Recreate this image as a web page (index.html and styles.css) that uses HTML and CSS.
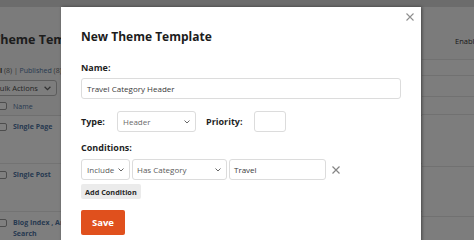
FILE: index.html
```html
<!DOCTYPE html>
<html>
<head>
<meta charset="utf-8">
<title>New Theme Template</title>
<link rel="stylesheet" href="styles.css">
</head>
<body>
<div class="screen">
  <div class="adminbar"></div>
  <div class="page">
    <div class="main">
      <h1 class="page-title">Theme Templates</h1>
      <div class="subsub"><span class="cur">All</span> <span class="count">(8)</span> | <a class="link">Published</a> <span class="count">(8)</span></div>
      <div class="tablenav">
        <div class="bulk"><span>Bulk Actions</span>
          <svg class="chev" viewBox="0 0 6 4" width="7" height="5"><path d="M0.5 0.5 L3 3 L5.5 0.5" fill="none" stroke="currentColor" stroke-width="1.1"/></svg>
        </div>
      </div>
      <div class="thead"><span class="cb"></span><a class="link">Name</a></div>
      <div class="trow"><span class="cb"></span><a class="link strong">Single Page</a></div>
      <div class="trow"><span class="cb"></span><a class="link strong">Single Post</a></div>
      <div class="trow"><span class="cb"></span><a class="link strong">Blog Index , Archive,<br>Search</a></div>
    </div>
    <div class="side">
      <div class="side-head">Enabled</div>
      <div class="side-row r1"></div>
      <div class="side-row r2"></div>
      <div class="side-row r3"></div>
      <div class="side-row r4"></div>
      <div class="side-row r5"></div>
      <div class="side-row r6"></div>
    </div>
  </div>
  <div class="overlay"></div>

  <div class="modal">
    <button class="close" aria-label="Close">
      <svg viewBox="0 0 8 8" width="8" height="8"><path d="M0.5 0.5 L7.5 7.5 M7.5 0.5 L0.5 7.5" stroke="currentColor" stroke-width="1.1" fill="none"/></svg>
    </button>
    <h2 class="modal-title">New Theme Template</h2>

    <label class="label name-label">Name:</label>
    <div class="input name-input">Travel Category Header</div>

    <div class="type-row">
      <label class="label type-label">Type:</label>
      <div class="select type-sel"><span>Header</span>
        <svg class="chev" viewBox="0 0 6 4" width="6" height="4"><path d="M0.5 0.5 L3 3 L5.5 0.5" fill="none" stroke="currentColor" stroke-width="1"/></svg>
      </div>
      <label class="label prio-label">Priority:</label>
      <div class="input prio-input"></div>
    </div>

    <label class="label cond-label">Conditions:</label>
    <div class="cond-row">
      <div class="select inc-sel"><span>Include</span>
        <svg class="chev" viewBox="0 0 6 4" width="6" height="4"><path d="M0.5 0.5 L3 3 L5.5 0.5" fill="none" stroke="currentColor" stroke-width="1"/></svg>
      </div>
      <div class="select cat-sel"><span>Has Category</span>
        <svg class="chev" viewBox="0 0 6 4" width="6" height="4"><path d="M0.5 0.5 L3 3 L5.5 0.5" fill="none" stroke="currentColor" stroke-width="1"/></svg>
      </div>
      <div class="input travel-input">Travel</div>
      <svg class="remove" viewBox="0 0 8 8" width="8" height="8"><path d="M0.5 0.5 L7.5 7.5 M7.5 0.5 L0.5 7.5" stroke="currentColor" stroke-width="1.2" fill="none"/></svg>
    </div>
    <button class="add-btn">Add Condition</button>

    <button class="save-btn">Save</button>
  </div>
</div>
</body>
</html>
```

FILE: styles.css
```css
* { box-sizing: border-box; }

html, body {
  margin: 0;
  padding: 0;
}

body {
  font-family: "Open Sans", "Noto Sans", "Liberation Sans", sans-serif;
  width: 474px;
  height: 240px;
  overflow: hidden;
}

.screen {
  position: relative;
  width: 474px;
  height: 240px;
  overflow: hidden;
  background: #f6f6f6;
  display: flex;
  flex-direction: column;
}

.adminbar {
  height: 7px;
  flex: none;
  background: #d8d8d8;
}

.page {
  flex: 1;
  display: flex;
}

.main {
  flex: 1;
  margin-left: -10px;
  color: #404040;
}

.page-title {
  margin: 23px 0 0 3px;
  font-size: 12.5px;
  line-height: 19px;
  font-weight: 700;
  color: #3a3a3a;
  white-space: nowrap;
}

.subsub {
  margin-top: 16px;
  padding-left: 3px;
  font-size: 7px;
  line-height: 12px;
  color: #6a6a6a;
  white-space: nowrap;
}

.subsub .cur { color: #3a3a3a; font-weight: 700; }

.link {
  color: #4f74a2;
}

.strong { font-weight: 700; }

.tablenav {
  margin-top: 3px;
  height: 17px;
}

.bulk {
  width: 67px;
  height: 16px;
  border: 1px solid #b8b8b8;
  border-radius: 3px;
  background: #fbfbfb;
  font-size: 7.5px;
  line-height: 14px;
  color: #4a4a4a;
  display: flex;
  align-items: center;
  justify-content: space-between;
  padding: 0 5px 0 4px;
  white-space: nowrap;
}

.thead {
  height: 19px;
  display: flex;
  align-items: center;
  gap: 6px;
  padding-left: 7px;
  font-size: 7px;
  border-bottom: 1px solid #dedede;
}

.trow {
  height: 48px;
  display: flex;
  align-items: flex-start;
  gap: 6px;
  padding: 5px 0 0 7px;
  font-size: 7px;
  line-height: 11px;
  background: #fdfdfd;
  border-bottom: 1px solid #e6e6e6;
  white-space: nowrap;
}

.cb {
  width: 10px;
  height: 8px;
  flex: none;
  border: 1px solid #9a9a9a;
  border-radius: 2px;
  background: #fff;
  margin-top: 2px;
}

.thead .cb { margin-top: 0; }

.side {
  width: 52px;
  flex: none;
  display: flex;
  flex-direction: column;
}

.side-head {
  height: 53px;
  padding: 28px 0 0 33px;
  font-size: 7.5px;
  line-height: 12px;
  color: #333;
  white-space: nowrap;
  border-bottom: 1px solid #e2e2e2;
}

.side-row { border-bottom: 1px solid #e2e2e2; background: #fafafa; }
.side-row.r1 { height: 16px; }
.side-row.r2 { height: 21px; }
.side-row.r3 { height: 18px; }
.side-row.r4 { height: 52px; }
.side-row.r5 { height: 50px; }
.side-row.r6 { flex: 1; border-bottom: none; }

.overlay {
  position: absolute;
  inset: 0;
  background: rgba(0, 0, 0, 0.5);
}

/* Modal */
.modal {
  position: absolute;
  left: 61px;
  top: 7px;
  width: 360px;
  height: 260px;
  background: #fff;
  box-shadow: 1px 0 3px rgba(0, 0, 0, 0.45);
  padding: 22px 20px 0 20px;
  color: #1f1f1f;
}

.close {
  position: absolute;
  top: 6px;
  right: 7px;
  width: 8px;
  height: 8px;
  padding: 0;
  border: 0;
  background: none;
  color: #8f8f8f;
  display: flex;
}

.modal-title {
  margin: 0;
  font-size: 12px;
  line-height: 16px;
  font-weight: 700;
  color: #1c1c1c;
}

.label {
  display: block;
  font-size: 9px;
  line-height: 12px;
  font-weight: 700;
  color: #1f1f1f;
}

.name-label { margin-top: 17px; }

.input, .select {
  height: 21px;
  border: 1px solid #dcdcdc;
  border-radius: 3px;
  background: #fff;
  font-size: 8px;
  line-height: 19px;
  color: #3a3a3a;
  padding: 0 5px;
  white-space: nowrap;
}

.name-input {
  margin-top: 4px;
  width: 320px;
}

.type-row {
  margin-top: 12px;
  display: flex;
  align-items: center;
}

.type-label { width: 36px; flex: none; }

.select {
  display: flex;
  align-items: center;
  justify-content: space-between;
  color: #5a5a5a;
}

.chev { color: #666; flex: none; }

.type-sel { width: 79px; color: #6a6a6a; }

.prio-label { margin-left: 10px; width: 48px; flex: none; }

.prio-input { width: 32px; }

.cond-label { margin-top: 10px; }

.cond-row {
  margin-top: 5px;
  display: flex;
  align-items: center;
  gap: 2px;
}

.inc-sel { width: 49px; }
.cat-sel { width: 95px; padding-left: 4px; }
.travel-input { width: 97px; padding-left: 4px; }

.remove {
  margin-left: 4px;
  color: #858585;
}

.add-btn {
  display: block;
  margin-top: 4px;
  height: 15px;
  padding: 0 4px;
  border: 0;
  border-radius: 2px;
  background: #ebebeb;
  font-family: inherit;
  font-size: 7.3px;
  font-weight: 700;
  color: #2a2a2a;
}

.save-btn {
  display: block;
  margin-top: 11px;
  width: 44px;
  height: 25px;
  padding: 0;
  border: 0;
  border-radius: 2px;
  background: #e0501d;
  font-family: inherit;
  font-size: 9.5px;
  font-weight: 700;
  color: #fff;
}
```
